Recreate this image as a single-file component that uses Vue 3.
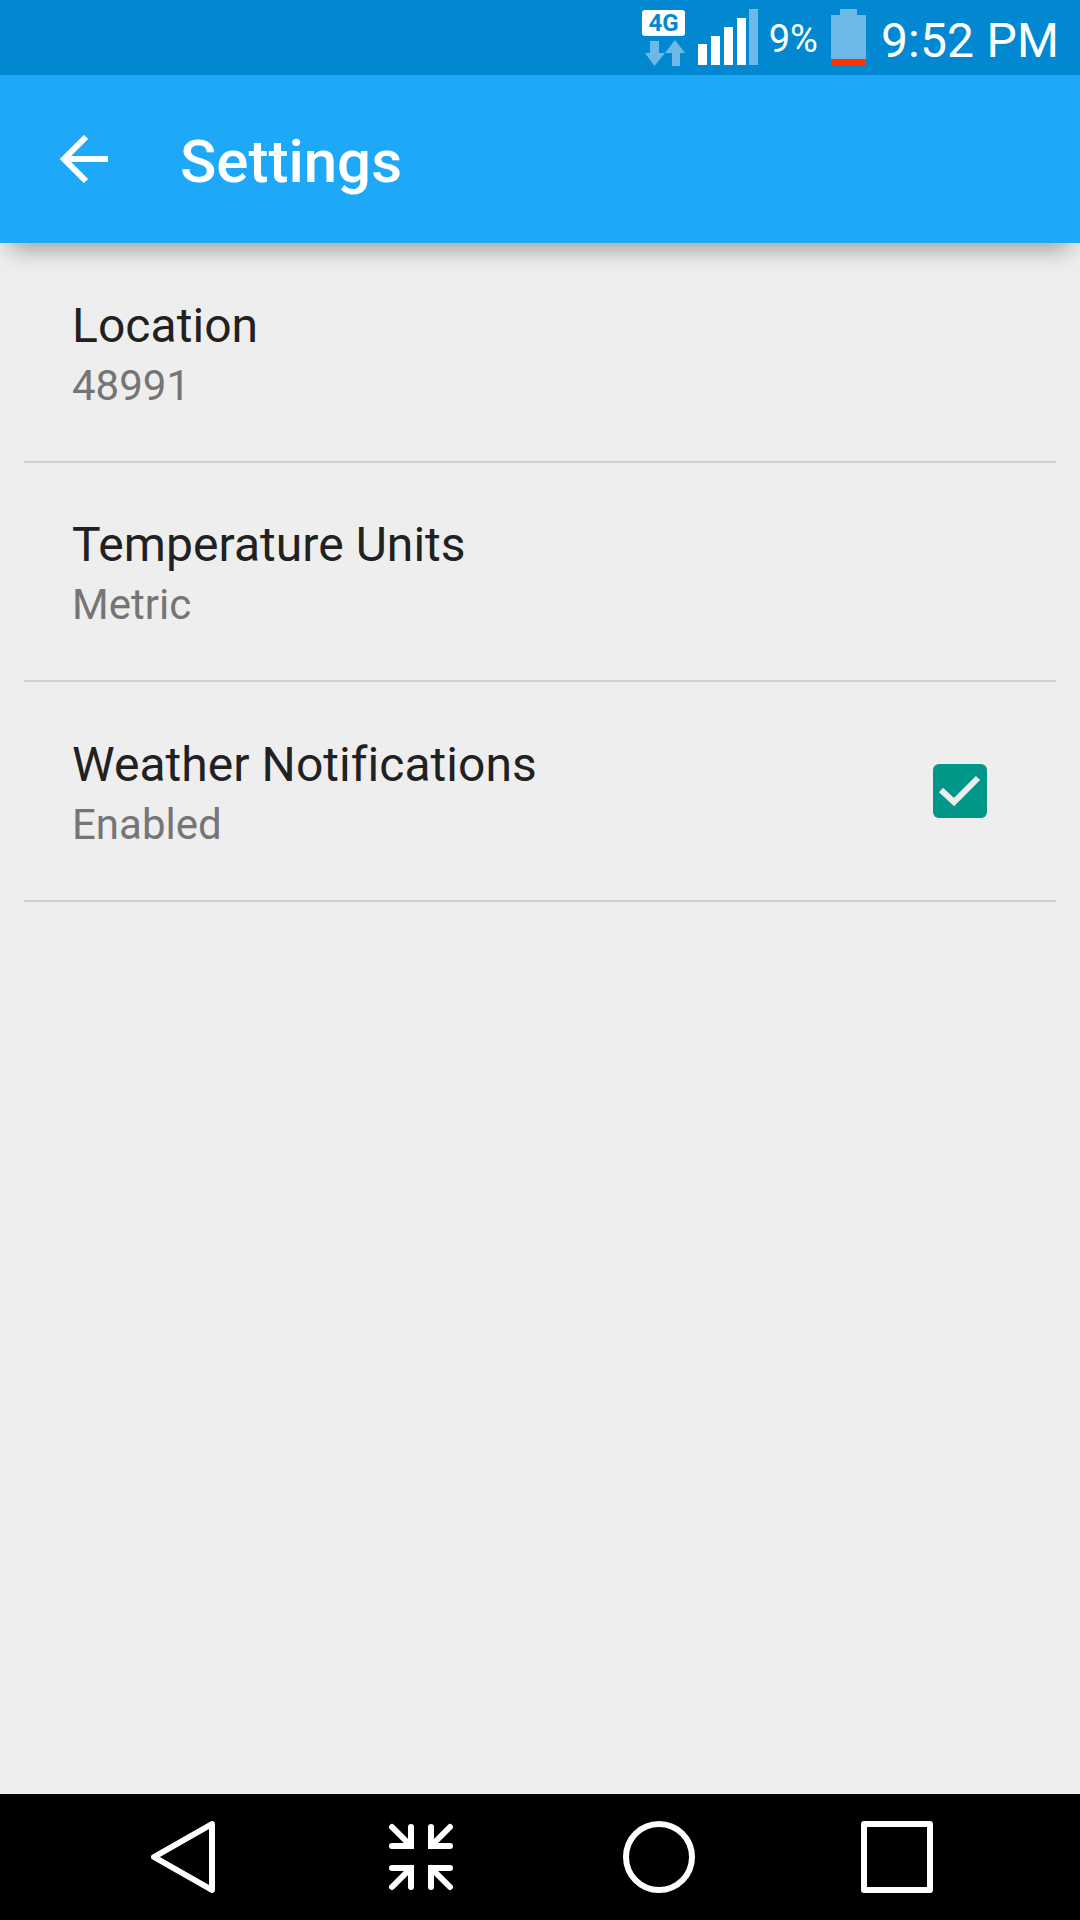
<template>
  <div class="screen">
    <div class="status-bar">
      <svg class="net" width="44" height="56" viewBox="0 0 44 56">
        <rect x="0" y="0" width="43" height="26" rx="3" fill="#fff" />
        <text x="21.5" y="21" text-anchor="middle" class="net-text">4G</text>
        <path d="M7 31h9v12h6L11.500 56 2 43h5zM32 30l10 13h-5v13h-8V43h-7z" fill="#6cb8e6" transform="translate(1 0)" />
      </svg>
      <svg class="signal" width="60" height="56" viewBox="0 0 60 56">
        <rect x="0" y="35" width="9" height="21" fill="#fff" />
        <rect x="13" y="27" width="9" height="29" fill="#fff" />
        <rect x="26" y="18" width="9" height="38" fill="#fff" />
        <rect x="39" y="9" width="9" height="47" fill="#fff" />
        <rect x="51" y="0" width="9" height="56" fill="#6cb8e6" />
      </svg>
      <span class="percent">9%</span>
      <svg class="battery" width="35" height="56" viewBox="0 0 35 56">
        <path d="M9 0h17v6h9v44H0V6h9z" fill="#6cb8e6" />
        <rect x="0" y="50" width="35" height="6" fill="#ff3300" />
      </svg>
      <span class="clock">9:52 PM</span>
    </div>

    <header class="app-bar">
      <svg class="back" width="48" height="48" viewBox="0 0 48 48">
        <path d="M48 24H4M26 2L4 24l22 22" fill="none" stroke="#fff" stroke-width="6" />
      </svg>
      <h1 class="title">Settings</h1>
    </header>

    <main class="list">
      <div v-for="item in items" :key="item.title" class="row">
        <div class="row-text">
          <div class="row-title">{{ item.title }}</div>
          <div class="row-sub">{{ item.value }}</div>
        </div>
        <svg v-if="item.checked" class="check" width="54" height="54" viewBox="0 0 54 54">
          <rect width="54" height="54" rx="6" fill="#009688" />
          <path d="M8 26l13 12L45 14" fill="none" stroke="#eeeeee" stroke-width="6" />
        </svg>
      </div>
    </main>

    <nav class="nav-bar">
      <svg width="72" height="76" viewBox="0 0 72 76">
        <path d="M65 5L7 38l58 33z" fill="none" stroke="#fff" stroke-width="6" stroke-linejoin="round" />
      </svg>
      <svg width="72" height="72" viewBox="0 0 72 72">
        <path
          d="M7 6l19 19M26 6v19H7M65 6L46 25M46 6v19h19M7 66l19-19M26 66V47H7M65 66L46 47M46 66V47h19"
          fill="none"
          stroke="#fff"
          stroke-width="6"
          stroke-linecap="round"
        />
      </svg>
      <svg width="72" height="72" viewBox="0 0 72 72">
        <circle cx="36" cy="36" r="33" fill="none" stroke="#fff" stroke-width="6" />
      </svg>
      <svg width="72" height="72" viewBox="0 0 72 72">
        <rect x="3" y="3" width="66" height="66" fill="none" stroke="#fff" stroke-width="6" stroke-linejoin="round" />
      </svg>
    </nav>
  </div>
</template>

<script setup>
const items = [
  { title: 'Location', value: '48991' },
  { title: 'Temperature Units', value: 'Metric' },
  { title: 'Weather Notifications', value: 'Enabled', checked: true }
]
</script>

<style>
html,
body {
  margin: 0;
  background: #eeeeee;
}
</style>

<style scoped>
.screen {
  display: flex;
  flex-direction: column;
  width: 1080px;
  height: 1920px;
  overflow: hidden;
  background: #eeeeee;
  font-family: Roboto, sans-serif;
}

.status-bar {
  display: flex;
  justify-content: flex-end;
  align-items: flex-start;
  flex: 0 0 75px;
  box-sizing: border-box;
  padding: 9px 21px 0 0;
  background: #0288d1;
  color: #fff;
}

.net {
  margin: 1px 12px 0 0;
}

.net-text {
  font-family: Roboto, sans-serif;
  font-weight: 700;
  font-size: 24px;
  fill: #0288d1;
}

.percent {
  margin: 9px 13px 0 11px;
  font-size: 38px;
  line-height: 42px;
}

.clock {
  margin: 4px 0 0 15px;
  font-size: 48px;
  line-height: 56px;
  letter-spacing: 0.2px;
}

.app-bar {
  position: relative;
  z-index: 1;
  display: flex;
  align-items: center;
  flex: 0 0 168px;
  padding-left: 60px;
  background: #1da9f8;
  box-shadow: 0 14px 24px -10px rgba(0, 0, 0, 0.4);
}

.back {
  flex: none;
}

.title {
  margin: 4px 0 0 72px;
  font-size: 60px;
  font-weight: 500;
  color: #fff;
}

.list {
  flex: 1;
  padding: 0 24px;
}

.row {
  display: flex;
  justify-content: space-between;
  align-items: center;
  box-sizing: border-box;
  height: 219.5px;
  padding: 0 69px 0 48px;
  border-bottom: 2px solid #d0d0d0;
}

.row-text {
  margin-top: 8px;
}

.row-title {
  font-size: 48px;
  line-height: 60px;
  letter-spacing: 0.05px;
  color: #212121;
}

.row-sub {
  font-size: 42px;
  line-height: 60px;
  color: #757575;
}

.nav-bar {
  display: grid;
  grid-template-columns: repeat(4, 238px);
  justify-items: center;
  align-items: center;
  flex: 0 0 126px;
  padding-left: 64px;
  background: #000;
}
</style>
